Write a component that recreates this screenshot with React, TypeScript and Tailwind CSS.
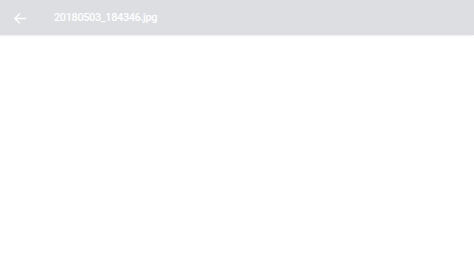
export default function App() {
  return (
    <div className="w-[474px] h-[266px] bg-white" style={{ fontFamily: 'Roboto, "Liberation Sans", sans-serif' }}>
      <div className="h-[35px] bg-[#dddee2] flex items-center pt-[1px] shadow-[0_1px_2px_rgba(0,0,0,0.08)]">
        <div className="w-[54px] flex items-center pl-[13px]">
          <svg width="15" height="15" viewBox="0 0 24 24" fill="none" stroke="white" strokeWidth="2.2">
            <path d="M21 12H3M11 4l-8 8 8 8" />
          </svg>
        </div>
        <span className="text-[11px] font-medium text-white tracking-[-0.4px]">20180503_184346.jpg</span>
      </div>
    </div>
  );
}
